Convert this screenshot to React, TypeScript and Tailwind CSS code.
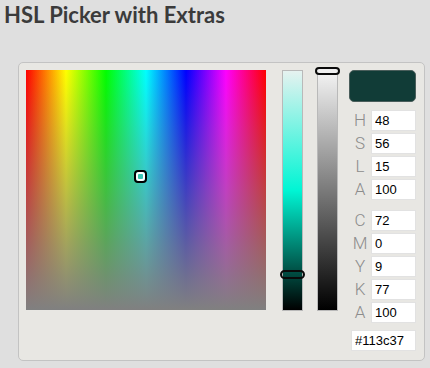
import React from 'react';

const hsla = [
    { k: 'H', v: '48' },
    { k: 'S', v: '56' },
    { k: 'L', v: '15' },
    { k: 'A', v: '100' },
];

const cmyk = [
    { k: 'C', v: '72' },
    { k: 'M', v: '0' },
    { k: 'Y', v: '9' },
    { k: 'K', v: '77' },
    { k: 'A', v: '100' },
];

const Field = ({ k, v }: { k: string; v: string }) => (
    <div className="flex items-center h-[21px]">
        <span className="w-[22px] text-center text-[17px] font-light leading-none text-[#8c8c8c] font-['Roboto',sans-serif]">
            {k}
        </span>
        <input
            readOnly
            value={v}
            className="w-[45px] h-[21px] bg-white border border-[#e2e2e2] px-[3px] text-[13px] text-black outline-none font-['Liberation_Sans',Arial,sans-serif]"
        />
    </div>
);

export default function App() {
    return (
        <div className="w-[430px] h-[368px] bg-[#dfdfdf] overflow-hidden">
            <h1 className="pl-[4px] pt-[1px] text-[22px] font-bold leading-[28px] text-[#3b3b3b] font-['Lato',sans-serif]">
                HSL Picker with Extras
            </h1>
            <div className="ml-[18px] mt-[33px] w-[407px] h-[299px] bg-[#e8e7e3] border border-[#c3c3c3] rounded-[5px] pl-[7px] pt-[7px]">
                <div className="flex">
                    {/* saturation / hue plane */}
                    <div className="relative w-[240px] h-[240px] bg-[linear-gradient(to_right,#f00,#ff0_16.67%,#0f0_33.33%,#0ff_50%,#00f_66.67%,#f0f_83.33%,#f00)]">
                        <div className="absolute inset-0 bg-[linear-gradient(to_bottom,rgba(128,128,128,0),#808080)]" />
                        <div className="absolute left-[108px] top-[100px] w-[13px] h-[13px] rounded-[4px] border-2 border-black">
                            <div className="w-full h-full rounded-[3px] border-2 border-white" />
                        </div>
                    </div>

                    {/* lightness */}
                    <div className="relative ml-[16px] w-[21px] h-[241px] border border-[#b9b9b9] bg-[linear-gradient(to_bottom,#e6f2f0,#00f5d4_50%,#000000)]">
                        <div className="absolute left-[-3px] top-[199px] w-[25px] h-[9px] rounded-full border-2 border-[#0a0a0a]" />
                    </div>

                    {/* alpha */}
                    <div className="relative ml-[14px] w-[21px] h-[241px] border border-[#b9b9b9] bg-[linear-gradient(to_bottom,#f4f4f4,#000000)]">
                        <div className="absolute left-[-3px] top-[-4px] w-[25px] h-[8px] rounded-full border-2 border-[#0a0a0a] bg-[#efefef]" />
                    </div>

                    <div className="ml-[11px] flex flex-col">
                        <div className="w-[67px] h-[32px] rounded-[5px] bg-[#113c37] border border-[#4a5e5b]" />
                        <div className="mt-[8px] flex flex-col gap-[2px]">
                            {hsla.map((r) => (
                                <Field key={r.k} k={r.k} v={r.v} />
                            ))}
                        </div>
                        <div className="mt-[10px] flex flex-col gap-[2px]">
                            {cmyk.map((r, i) => (
                                <Field key={i} k={r.k} v={r.v} />
                            ))}
                        </div>
                        <input
                            readOnly
                            value="#113c37"
                            className="mt-[7px] ml-[2px] w-[65px] h-[21px] bg-white border border-[#e2e2e2] px-[3px] text-[13px] text-black outline-none font-['Liberation_Sans',Arial,sans-serif]"
                        />
                    </div>
                </div>
            </div>
        </div>
    );
}
